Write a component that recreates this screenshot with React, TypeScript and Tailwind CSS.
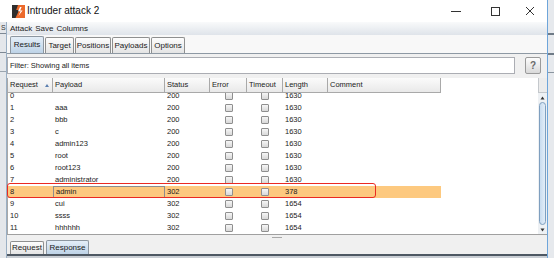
import React from 'react';

interface Row {
  id: number;
  payload: string;
  status: number;
  length: number;
}

const rows: Row[] = [
  { id: 0, payload: '', status: 200, length: 1630 },
  { id: 1, payload: 'aaa', status: 200, length: 1630 },
  { id: 2, payload: 'bbb', status: 200, length: 1630 },
  { id: 3, payload: 'c', status: 200, length: 1630 },
  { id: 4, payload: 'admin123', status: 200, length: 1630 },
  { id: 5, payload: 'root', status: 200, length: 1630 },
  { id: 6, payload: 'root123', status: 200, length: 1630 },
  { id: 7, payload: 'administrator', status: 200, length: 1630 },
  { id: 8, payload: 'admin', status: 302, length: 378 },
  { id: 9, payload: 'cui', status: 302, length: 1654 },
  { id: 10, payload: 'ssss', status: 302, length: 1654 },
  { id: 11, payload: 'hhhhhh', status: 302, length: 1654 },
];

const headers = ['Request', 'Payload', 'Status', 'Error', 'Timeout', 'Length', 'Comment'];
const colW = ['w-[45px]', 'w-[112px]', 'w-[45px]', 'w-[37px]', 'w-[36px]', 'w-[45px]', 'w-[113px]'];

function BurpLogo() {
  return (
    <svg width="13" height="13" viewBox="0 0 13 13">
      <rect width="13" height="13" fill="#ec6a2c" />
      <path d="M0 0 H6 L4.2 5 H7.2 L3.5 13 H0 Z" fill="#2e2e2e" />
      <path d="M8 2 L6 6.2 H8.6 L6.4 11 L10.6 5.4 H8.2 L9.6 2 Z" fill="#ffffff" />
    </svg>
  );
}

function TitleBar() {
  return (
    <div className="flex h-[22px] items-center bg-white">
      <div className="ml-[12px] mr-[2px] flex">
        <BurpLogo />
      </div>
      <span className="text-[10px] leading-none text-[#111]">Intruder attack 2</span>
      <div className="ml-auto flex items-center">
        <svg width="12" height="12" viewBox="0 0 12 12" className="mr-[28px]">
          <line x1="1" y1="6.5" x2="11" y2="6.5" stroke="#333" strokeWidth="1" />
        </svg>
        <svg width="10" height="10" viewBox="0 0 10 10" className="mr-[25px]">
          <rect x="1.5" y="1.5" width="8" height="8" fill="none" stroke="#333" strokeWidth="1" />
        </svg>
        <svg width="10" height="10" viewBox="0 0 10 10" className="mr-[12px]">
          <path d="M1 1 L9 9 M9 1 L1 9" stroke="#333" strokeWidth="1" />
        </svg>
      </div>
    </div>
  );
}

function Tab({ label, w, active }: { label: string; w: string; active?: boolean }) {
  return (
    <div
      className={
        active
          ? `${w} flex h-[17px] items-center justify-center rounded-t-[2px] border border-b-0 border-[#8c96a0] bg-linear-to-b from-[#e4eef8] to-[#bed3e7] text-[8px] leading-none`
          : `${w} flex h-[16px] items-center justify-center rounded-t-[2px] border border-b-0 border-[#8e8f8f] bg-linear-to-b from-[#fdfdfd] to-[#e4e4e4] text-[8px] leading-none`
      }
    >
      {label}
    </div>
  );
}

function Check() {
  return <div className="h-[8px] w-[8px] rounded-[1px] border border-[#8f8f8f] bg-linear-to-b from-[#f6f6f6] to-[#d8d8d8]" />;
}

function TableRow({ row }: { row: Row }) {
  const sel = row.id === 8;
  return (
    <div className="flex h-[12px] text-[7.5px] leading-[12px] text-[#222]">
      <div className={`flex ${sel ? 'bg-[#fdc97f]' : 'bg-white'}`}>
        <div className={`${colW[0]} pl-[2px]`}>{row.id}</div>
        <div className={`${colW[1]} pl-[2px] ${sel ? 'border border-[#8d8d8d] pl-[1px] leading-[10px]' : ''}`}>{row.payload}</div>
        <div className={`${colW[2]} pl-[2px]`}>{row.status}</div>
        <div className={`${colW[3]} flex items-center justify-center`}>
          <Check />
        </div>
        <div className={`${colW[4]} flex items-center justify-center`}>
          <Check />
        </div>
        <div className={`${colW[5]} pl-[2px]`}>{row.length}</div>
        <div className={colW[6]} />
      </div>
    </div>
  );
}

function Scrollbar() {
  return (
    <div className="flex w-[9px] flex-col bg-[#eef1f4]">
      <div className="flex h-[9px] items-center justify-center">
        <svg width="5" height="4" viewBox="0 0 5 4">
          <path d="M2.5 0.5 L4.5 3.5 H0.5 Z" fill="#333" />
        </svg>
      </div>
      <div className="mx-[1px] flex-1 rounded-[4px] border border-[#7f9fbf] bg-linear-to-r from-[#c9dcef] to-[#e2edf8]" />
      <div className="flex h-[9px] items-center justify-center">
        <svg width="5" height="4" viewBox="0 0 5 4">
          <path d="M0.5 0.5 H4.5 L2.5 3.5 Z" fill="#333" />
        </svg>
      </div>
    </div>
  );
}

export default function App() {
  return (
    <div className="flex h-[258px] w-[554px] overflow-hidden bg-[#dfe3e8] font-['Liberation_Sans',Arial,sans-serif] text-[#1a1a1a]">
      <div className="relative flex w-[548px] flex-col border-r border-[#6ea5da]">
        <TitleBar />
        <div className="flex min-h-0 flex-1">
          {/* window behind, left edge */}
          <div className="flex w-[6px] flex-col bg-[#e4e7eb]">
            <div className="h-[11px] overflow-hidden pl-px text-[7px] leading-[11px] text-[#333]">S</div>
            <div className="h-[19px] border-t border-[#7d8894]" />
            <div className="h-[19px] border-t border-[#7d8894]" />
            <div className="flex-1 border-t border-[#9aa4ae]" />
          </div>

          <div className="flex min-w-0 flex-1 flex-col border-l border-[#9aafc4] bg-[#f0f0f0]">
            {/* menu */}
            <div className="flex h-[13px] items-center gap-[3px] bg-linear-to-b from-[#f9fafb] to-[#dfe4ea] pl-[3px] text-[8px] leading-none">
              <span>Attack</span>
              <span>Save</span>
              <span>Columns</span>
            </div>

            {/* tabs */}
            <div className="flex h-[19px] items-end gap-px border-b border-[#8e99a4] bg-[#f8f8f8] pl-[3px]">
              <Tab label="Results" w="w-[34px]" active />
              <Tab label="Target" w="w-[29px]" />
              <Tab label="Positions" w="w-[36px]" />
              <Tab label="Payloads" w="w-[38px]" />
              <Tab label="Options" w="w-[34px]" />
            </div>

            {/* filter */}
            <div className="mt-[3px] flex h-[17px] items-center">
              <div className="flex h-full w-[508px] items-center border border-[#abadb3] bg-white pl-[2px] text-[7.5px] leading-none text-[#222]">
                Filter: Showing all items
              </div>
              <div className="ml-[10px] flex h-full w-[16px] items-center justify-center rounded-[2px] border border-[#9a9a9a] bg-linear-to-b from-[#fdfdfd] to-[#d9d9d9] text-[10px] font-bold leading-none text-[#6a6a6a]">
                ?
              </div>
            </div>

            {/* table */}
            <div className="mt-[4px] flex flex-col">
              <div className="flex h-[15px]">
                <div className="flex border-b border-l border-[#a9a9a9] bg-linear-to-b from-[#fbfbfb] to-[#e9e9e9]">
                  {headers.map((h, i) => (
                    <div
                      key={h}
                      className={`${colW[i]} flex items-center border-r border-[#a9a9a9] pl-[2px] text-[7.5px] leading-none text-[#222]`}
                    >
                      {h}
                      {i === 0 && (
                        <svg width="4" height="3" viewBox="0 0 4 3" className="ml-auto mr-[3px]">
                          <path d="M2 0 L4 3 H0 Z" fill="#5b7fb0" />
                        </svg>
                      )}
                    </div>
                  ))}
                </div>
                <div className="flex-1 bg-white" />
                <div className="w-[9px] border-b border-l border-[#c4c8cc] bg-[#ececec]" />
              </div>
              <div className="flex h-[141px] border-l border-[#a9a9a9]">
                <div className="flex-1 overflow-hidden bg-white">
                  <div className="-mt-[3px]">
                    {rows.map((r) => (
                      <TableRow key={r.id} row={r} />
                    ))}
                  </div>
                </div>
                <Scrollbar />
              </div>
            </div>

            {/* splitter */}
            <div className="flex h-[6px] items-center justify-center border-t border-[#a0a0a0]">
              <div className="h-px w-[10px] bg-[#a8a8a8]" />
            </div>

            {/* bottom tabs */}
            <div className="flex h-[14px] items-end gap-[2px] pl-[3px]">
              <div className="flex h-[13px] w-[34px] items-center justify-center rounded-t-[2px] border border-b-0 border-[#8e8f8f] bg-linear-to-b from-[#fdfdfd] to-[#e4e4e4] text-[8px] leading-none">
                Request
              </div>
              <div className="flex h-[14px] w-[43px] items-center justify-center rounded-t-[2px] border border-b-0 border-[#8c96a0] bg-linear-to-b from-[#e4eef8] to-[#bed3e7] text-[8px] leading-none">
                Response
              </div>
            </div>
            <div className="h-[2px] bg-[#4e5863]" />
            <div className="h-[2px] bg-[#c9ced4]" />
          </div>
        </div>

        {/* annotation box around row 8 */}
        <div className="absolute left-[7px] top-[183px] h-[15px] w-[369px] rounded-[3px] border border-[#ea2a22]" />
      </div>

      {/* window behind, right edge */}
      <div className="flex w-[6px] flex-col bg-[#e6e9ed]">
        <div className="h-[33px]" />
        <div className="h-[20px] border-t-2 border-[#6f7b87]" />
        <div className="h-[19px] border-t-2 border-[#6f7b87]" />
        <div className="flex-1 border-t border-[#8a959f]" />
      </div>
    </div>
  );
}
